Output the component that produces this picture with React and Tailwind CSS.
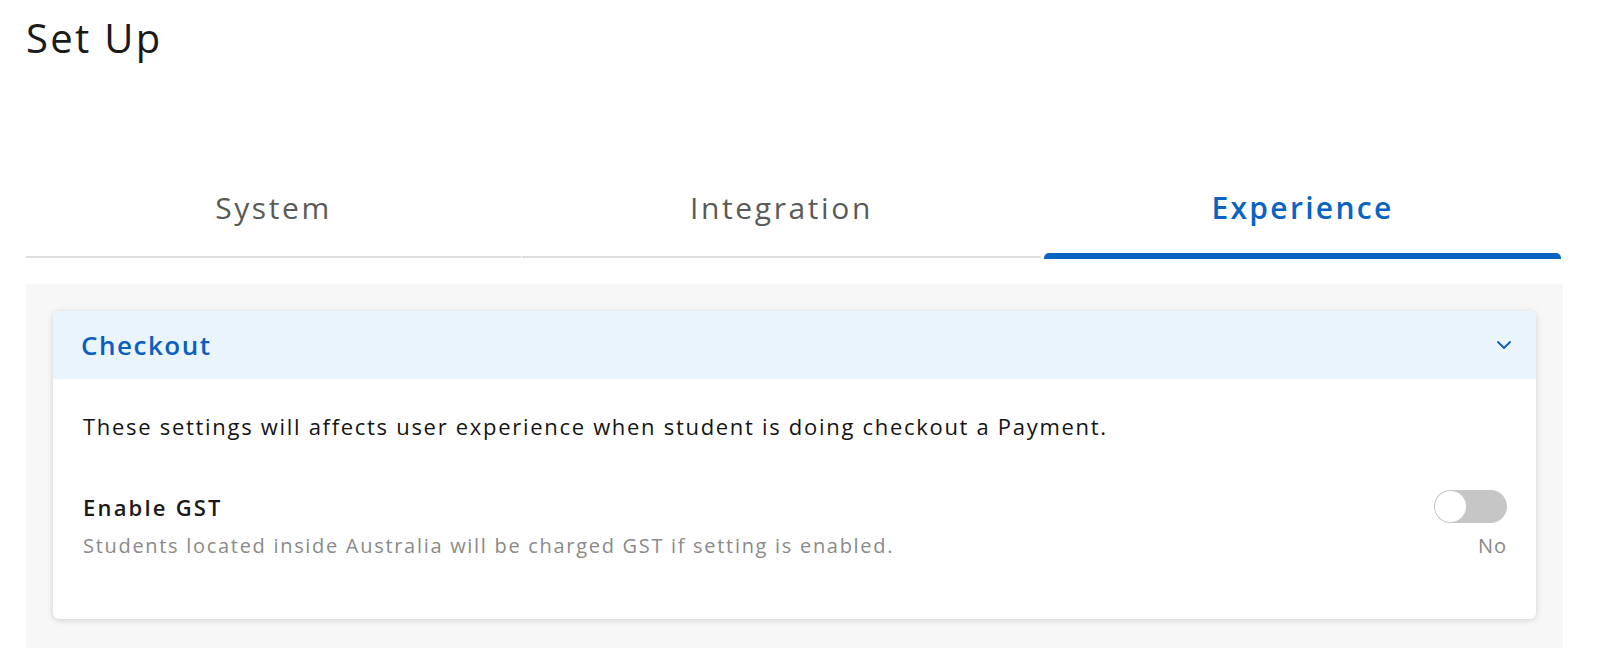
import React, { useState } from 'react';

const tabs = [
  { label: 'System', width: 'w-[495px]', gap: '' },
  { label: 'Integration', width: 'w-[519px]', gap: 'ml-[1px]' },
  { label: 'Experience', width: 'w-[517px]', gap: 'ml-[3px]' },
];

const Toggle = ({ on, onChange }) => (
  <button
    onClick={() => onChange(!on)}
    className={`flex h-[33px] w-[73px] items-center rounded-full px-[1px] ${on ? 'justify-end bg-[#0a63c2]' : 'justify-start bg-[#c6c6c6]'}`}
  >
    <span className="block h-[31px] w-[31px] rounded-full bg-white" />
  </button>
);

export default function App() {
  const [active, setActive] = useState(2);
  const [gst, setGst] = useState(false);

  return (
    <div className="min-h-screen bg-white pl-[26px] pr-[37px] font-['Open_Sans',sans-serif]">
      {/* page title */}
      <h1 className="mt-[18px] text-[40px] leading-[40px] font-normal tracking-[2.3px] text-[#1a1a1a]">Set Up</h1>

      {/* tabs */}
      <div className="mt-[135px] flex items-start">
        {tabs.map((t, i) => (
          <button key={t.label} onClick={() => setActive(i)} className={`${t.width} ${t.gap} flex flex-col`}>
            <span
              className={`block text-center text-[30px] leading-[30px] ${
                active === i ? 'font-semibold text-[#0a63c2] tracking-[2.3px]' : 'font-normal text-[#5a5a5a] tracking-[2.6px]'
              }`}
            >
              {t.label}
            </span>
            {active === i ? (
              <span className="mt-[30px] block h-[6px] w-full rounded-t-[5px] bg-[#0a63c2]" />
            ) : (
              <span className="mt-[33px] block h-[2px] w-full bg-[#dedede]" />
            )}
          </button>
        ))}
      </div>

      {/* panel */}
      <div className="mt-[25px] bg-[#f7f7f7] p-[27px] pb-[40px]">
        <div className="overflow-hidden rounded-[6px] bg-white shadow-[0_1px_6px_rgba(0,0,0,0.16)]">
          <div className="flex h-[68px] items-center justify-between bg-[#eaf4fd] pl-[28px] pr-[25px]">
            <span className="text-[26px] font-semibold tracking-[1.5px] text-[#0c5fbd]">Checkout</span>
            <svg width="14" height="8" viewBox="0 0 14 8" fill="none">
              <polyline points="1,1 7,7 13,1" stroke="#0c5fbd" strokeWidth="1.8" strokeLinecap="round" strokeLinejoin="round" />
            </svg>
          </div>

          <div className="pl-[30px] pr-[29px] pt-[33px] pb-[59px]">
            <p className="text-[22px] leading-[28px] tracking-[1.7px] text-[#141414]">
              These settings will affects user experience when student is doing checkout a Payment.
            </p>

            <div className="mt-[50px] flex items-start justify-between">
              <div className="pt-[3px]">
                <div className="text-[22px] leading-[28px] font-semibold tracking-[2.2px] text-[#1a1a1a]">Enable GST</div>
                <div className="mt-[11px] text-[20px] leading-[28px] tracking-[1.7px] text-[#8a8a8a]">
                  Students located inside Australia will be charged GST if setting is enabled.
                </div>
              </div>
              <div className="flex flex-col items-end">
                <Toggle on={gst} onChange={setGst} />
                <span className="mt-[9px] text-[20px] leading-[28px] tracking-[1px] text-[#8a8a8a]">{gst ? 'Yes' : 'No'}</span>
              </div>
            </div>
          </div>
        </div>
      </div>
    </div>
  );
}
